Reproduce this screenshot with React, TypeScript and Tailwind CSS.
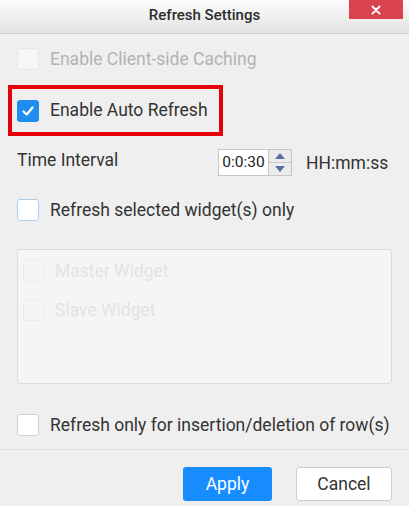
import React, { useState } from 'react';

const Check: React.FC<{ checked?: boolean; variant?: 'disabled' | 'focus' | 'normal' | 'ghost' }> = ({ checked, variant = 'normal' }) => {
  if (checked) {
    return (
      <span className="w-[22px] h-[22px] rounded-[3px] bg-[#1f8cf0] flex items-center justify-center shrink-0">
        <svg width="14" height="14" viewBox="0 0 14 14" fill="none">
          <path d="M2.5 7.5 L5.7 10.5 L11.5 3.5" stroke="white" strokeWidth="2.2" strokeLinecap="round" strokeLinejoin="round" />
        </svg>
      </span>
    );
  }
  const styles = {
    disabled: 'bg-[#f6f6f6] border-[#e6e6e6]',
    focus: 'bg-white border-[#a9cdee]',
    normal: 'bg-white border-[#cfcfcf]',
    ghost: 'bg-[#f5f5f5] border-[#ececec]',
  };
  return <span className={`w-[22px] h-[22px] rounded-[3px] border shrink-0 ${styles[variant]}`} />;
};

const App: React.FC = () => {
  const [autoRefresh] = useState(true);

  return (
    <div className="w-[409px] h-[506px] bg-[#efefef] flex flex-col font-['Roboto',sans-serif] text-[#333]">
      <div className="relative h-[34px] shrink-0 bg-gradient-to-b from-[#fcfcfc] to-[#e3e3e3] border-b border-[#d2d2d2] flex items-center justify-center">
        <span className="text-[15px] font-medium text-[#2c2c2c] -mt-[3px]">Refresh Settings</span>
        <button className="absolute right-[6px] top-0 w-[54px] h-[19px] bg-[#d9434f] flex items-center justify-center">
          <svg width="10" height="10" viewBox="0 0 10 10">
            <path d="M1.5 1.5 L8.5 8.5 M8.5 1.5 L1.5 8.5" stroke="white" strokeWidth="1.8" strokeLinecap="round" />
          </svg>
        </button>
      </div>

      <div className="flex flex-col px-[17px] text-[17.5px]">
        <div className="flex items-center gap-[11px] h-[22px] mt-[14px]">
          <Check variant="disabled" />
          <span className="text-[#b3b3b3]">Enable Client-side Caching</span>
        </div>

        <div className="-ml-[9px] w-[215px] h-[51px] mt-[15px] border-4 border-[#e6000a] flex items-center pl-[5px] gap-[11px]">
          <Check checked={autoRefresh} />
          <span>Enable Auto Refresh</span>
        </div>

        <div className="flex items-center mt-[13px] h-[27px]">
          <span className="w-[201px] -mt-[4px]">Time Interval</span>
          <div className="flex h-[27px] border border-[#c6c6c6] bg-white">
            <span className="w-[49px] flex items-center justify-center text-[15.5px] text-[#222]">0:0:30</span>
            <div className="w-[23px] flex flex-col border-l border-[#c6c6c6] bg-[#ececec]">
              <span className="flex-1 flex items-center justify-center border-b border-[#c6c6c6]">
                <svg width="10" height="6" viewBox="0 0 10 6"><path d="M0 6 L5 0 L10 6 Z" fill="#5b6fa6" /></svg>
              </span>
              <span className="flex-1 flex items-center justify-center">
                <svg width="10" height="6" viewBox="0 0 10 6"><path d="M0 0 L5 6 L10 0 Z" fill="#5b6fa6" /></svg>
              </span>
            </div>
          </div>
          <span className="ml-[14px] mt-[2px]">HH:mm:ss</span>
        </div>

        <div className="flex items-center gap-[11px] h-[22px] mt-[23px]">
          <Check variant="focus" />
          <span>Refresh selected widget(s) only</span>
        </div>

        <div className="mt-[28px] h-[135px] bg-[#f5f5f5] border border-[#dcdcdc] rounded-[3px] flex flex-col px-[5px] pt-[10px] gap-[17px]">
          <div className="flex items-center gap-[10px] h-[22px]">
            <Check variant="ghost" />
            <span className="text-[#e3e3e3]">Master Widget</span>
          </div>
          <div className="flex items-center gap-[10px] h-[22px]">
            <Check variant="ghost" />
            <span className="text-[#e3e3e3]">Slave Widget</span>
          </div>
        </div>

        <div className="flex items-center gap-[11px] h-[22px] mt-[30px]">
          <Check variant="normal" />
          <span>Refresh only for insertion/deletion of row(s)</span>
        </div>
      </div>

      <div className="mt-[13px] border-t border-[#dedede]" />

      <div className="flex justify-end gap-[24px] px-[17px] mt-[17px]">
        <button className="w-[89px] h-[34px] rounded-[3px] bg-[#168cff] text-white text-[17.5px]">Apply</button>
        <button className="w-[96px] h-[34px] rounded-[3px] bg-white border border-[#cdcdcd] text-[17.5px] text-[#333]">Cancel</button>
      </div>
    </div>
  );
};

export default App;
